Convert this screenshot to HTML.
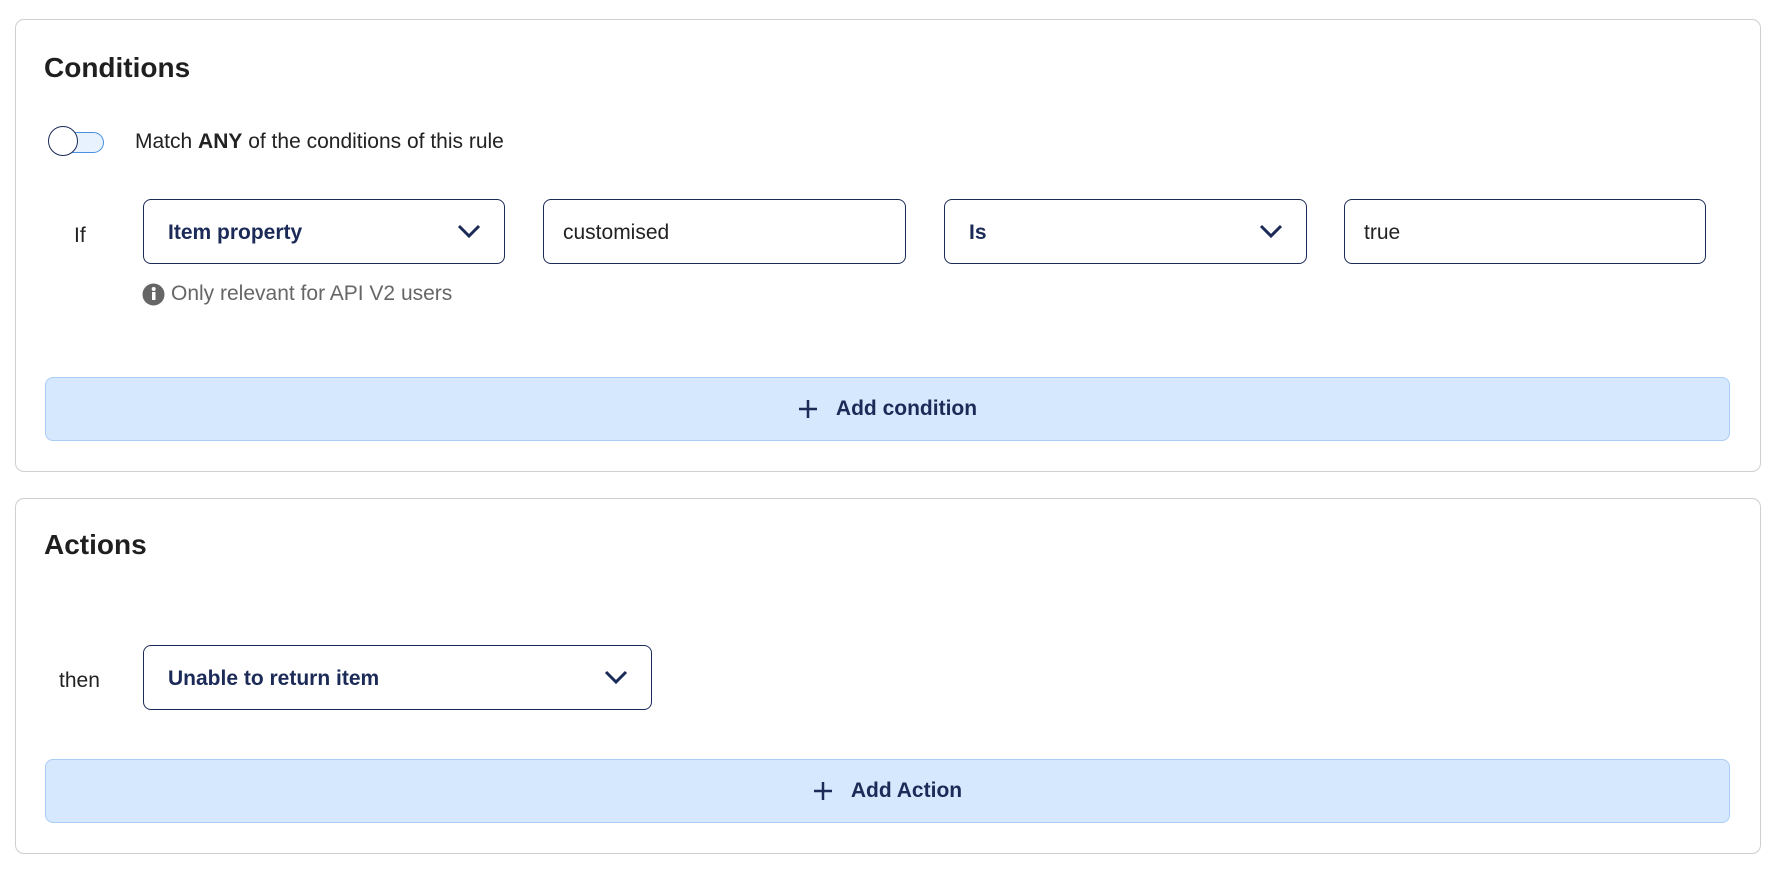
<!DOCTYPE html>
<html><head><meta charset="utf-8"><style>
*{box-sizing:border-box;margin:0;padding:0}
body{width:1774px;height:874px;background:#fff;font-family:"Liberation Sans",sans-serif;position:relative;overflow:hidden;color:#222}
.card{position:absolute;left:15px;width:1746px;border:1.5px solid #cfcfcf;border-radius:9px;background:#fff}
.abs{position:absolute}
h2{position:absolute;left:44px;font-size:28px;font-weight:bold;color:#1f1f1f;line-height:1}
.box{position:absolute;height:65px;border:1.5px solid #1b2a57;border-radius:8px;background:#fff;font-size:21px;display:flex;align-items:center;padding-left:24px;color:#222;padding-top:2px}
.sel{font-weight:bold;color:#1b2a57}
.chev{position:absolute;right:22px;top:22px}
.add{position:absolute;left:45px;width:1685px;height:64px;background:#d6e8fd;border:1.5px solid #a9cdf5;border-radius:8px;display:flex;align-items:center;justify-content:center;font-weight:bold;font-size:21px;color:#1b2a57}
.add svg{margin-right:18px}
.lbl{position:absolute;font-size:21px;color:#222}
</style></head><body>
<div class="card" style="top:19px;height:453px"></div>
<h2 style="top:54px">Conditions</h2>
<div class="abs" style="left:50px;top:132px;width:54px;height:21px;border:1.5px solid #4a90e2;border-radius:11px;background:#e8f2fe"></div>
<div class="abs" style="left:48px;top:126px;width:30px;height:30px;border:1.5px solid #1b2a57;border-radius:50%;background:#fff"></div>
<div class="lbl" style="left:135px;top:130px">Match <b>ANY</b> of the conditions of this rule</div>
<div class="lbl" style="left:74px;top:224px">If</div>
<div class="box sel" style="left:143px;top:199px;width:362px">Item property<svg class="chev" width="26" height="18" viewBox="0 0 26 18"><path d="M3 4l10 10 10-10" fill="none" stroke="#1b2a57" stroke-width="3"/></svg></div>
<div class="box" style="left:543px;top:199px;width:363px;padding-left:19px">customised</div>
<div class="box sel" style="left:944px;top:199px;width:363px">Is<svg class="chev" width="26" height="18" viewBox="0 0 26 18"><path d="M3 4l10 10 10-10" fill="none" stroke="#1b2a57" stroke-width="3"/></svg></div>
<div class="box" style="left:1344px;top:199px;width:362px;padding-left:19px">true</div>
<svg class="abs" style="left:142px;top:283px" width="23" height="23" viewBox="0 0 23 23"><circle cx="11.5" cy="11.5" r="11" fill="#666"/><rect x="10" y="9" width="3.5" height="8" fill="#fff"/><circle cx="11.7" cy="6" r="2" fill="#fff"/></svg>
<div class="lbl" style="left:171px;top:282px;color:#666">Only relevant for API V2 users</div>
<div class="add" style="top:377px"><svg width="20" height="20" viewBox="0 0 20 20"><path d="M10 1v18M1 10h18" stroke="#1b2a57" stroke-width="2.5"/></svg>Add condition</div>

<div class="card" style="top:498px;height:356px"></div>
<h2 style="top:531px">Actions</h2>
<div class="lbl" style="left:59px;top:669px">then</div>
<div class="box sel" style="left:143px;top:645px;width:509px">Unable to return item<svg class="chev" width="26" height="18" viewBox="0 0 26 18"><path d="M3 4l10 10 10-10" fill="none" stroke="#1b2a57" stroke-width="3"/></svg></div>
<div class="add" style="top:759px"><svg width="20" height="20" viewBox="0 0 20 20"><path d="M10 1v18M1 10h18" stroke="#1b2a57" stroke-width="2.5"/></svg>Add Action</div>
</body></html>
